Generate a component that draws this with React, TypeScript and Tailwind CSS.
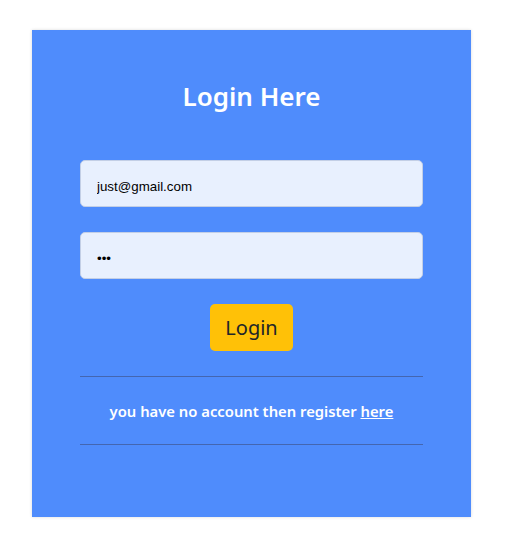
import React from 'react'

export default function App() {
  return (
    <div className="min-h-screen bg-white pt-[30px] pl-[32px]" style={{ fontFamily: '"Noto Sans", "Open Sans", sans-serif' }}>
      {/* login card */}
      <div className="w-[439px] h-[487px] bg-[#4f8cfc] px-[48px] pt-[48px] flex flex-col shadow-[0_0_3px_rgba(0,0,0,0.15)]">
        <h1 className="text-center text-[26px] leading-[36px] font-semibold text-white">Login Here</h1>

        <form className="mt-[46px] flex flex-col" onSubmit={e => e.preventDefault()}>
          <input
            type="email"
            defaultValue="just@gmail.com"
            className="h-[47px] w-full rounded-[5px] border border-[#c3cfe6] bg-[#e8f0fe] px-[16px] pt-[6px] text-[13.33px] text-black outline-none"
            style={{ fontFamily: '"Liberation Sans", Arial, sans-serif' }}
          />
          <input
            type="password"
            defaultValue="abc"
            className="mt-[25px] h-[47px] w-full rounded-[5px] border border-[#c3cfe6] bg-[#e8f0fe] px-[16px] pt-[6px] text-[13.33px] text-black outline-none"
            style={{ fontFamily: '"Liberation Sans", Arial, sans-serif' }}
          />
          <div className="mt-[25px] flex justify-center">
            <button type="submit" className="h-[47px] w-[83px] rounded-[5px] bg-[#ffc107] text-[20px] text-[#212529]">
              Login
            </button>
          </div>
        </form>

        <hr className="mt-[25px] border-0 border-t border-[#4466b0]" />
        <p className="pt-[24px] pb-[23px] text-center text-[14.8px] leading-[20px] font-semibold text-white">
          you have no account then register <a href="#" className="underline">here</a>
        </p>
        <hr className="border-0 border-t border-[#4466b0]" />
      </div>
    </div>
  )
}
